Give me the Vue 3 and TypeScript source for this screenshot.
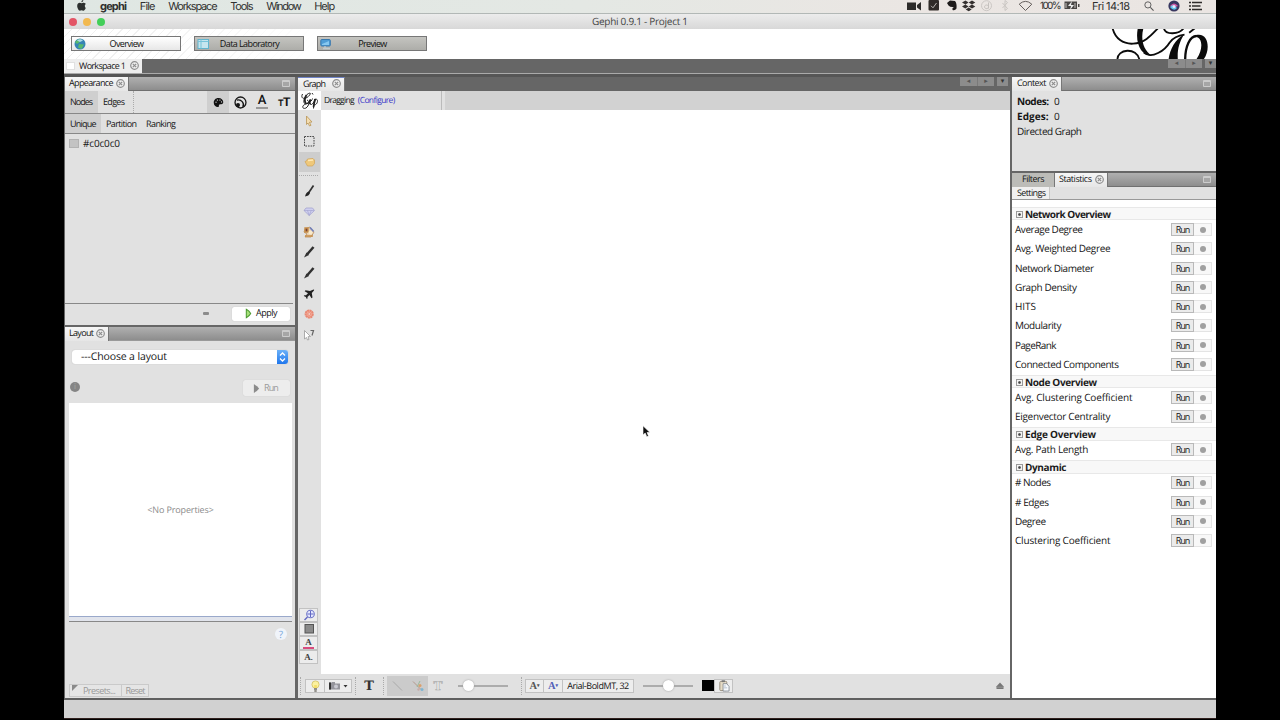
<script setup lang="ts">
import type { Directive } from 'vue'

interface Stat {
  name: string
  width: number
}

interface StatGroup {
  title: string
  width: number
  items: Stat[]
}

// Tracks a label out (or in) so that its glyphs span the given width in pixels.
const vFit: Directive<HTMLElement, number> = {
  mounted(el, { value }) {
    const range = document.createRange()
    range.selectNodeContents(el)
    const gaps = (el.textContent ?? '').length - 1
    const natural = range.getBoundingClientRect().width
    if (gaps > 0 && natural > 0) el.style.letterSpacing = `${((value - natural) / gaps).toFixed(3)}px`
  },
}

const menus: Stat[] = [
  { name: 'File', width: 15.5 },
  { name: 'Workspace', width: 49.5 },
  { name: 'Tools', width: 23.5 },
  { name: 'Window', width: 35.5 },
  { name: 'Help', width: 21 },
]

const groups: StatGroup[] = [
  {
    title: 'Network Overview',
    width: 86,
    items: [
      { name: 'Average Degree', width: 68 },
      { name: 'Avg. Weighted Degree', width: 95.5 },
      { name: 'Network Diameter', width: 79 },
      { name: 'Graph Density', width: 62 },
      { name: 'HITS', width: 21 },
      { name: 'Modularity', width: 46.5 },
      { name: 'PageRank', width: 41.5 },
      { name: 'Connected Components', width: 104 },
    ],
  },
  {
    title: 'Node Overview',
    width: 72,
    items: [
      { name: 'Avg. Clustering Coefficient', width: 117.5 },
      { name: 'Eigenvector Centrality', width: 95.5 },
    ],
  },
  { title: 'Edge Overview', width: 71, items: [{ name: 'Avg. Path Length', width: 73.5 }] },
  {
    title: 'Dynamic',
    width: 41.5,
    items: [
      { name: '# Nodes', width: 36 },
      { name: '# Edges', width: 34 },
      { name: 'Degree', width: 31 },
      { name: 'Clustering Coefficient', width: 95.5 },
    ],
  },
]
</script>

<template>
  <div class="screen">
    <div class="desktop">
      <header class="menubar">
        <svg class="apple" viewBox="0 0 10 12"><path d="M7 0C5.600.3 4.800 1.300 4.900 2.400 6.200 2.400 7.100 1.200 7 0ZM8.700 6.400C8.700 5 9.700 4.400 9.800 4.300 9 3.100 7.600 3 7 3 6.200 3 5.500 3.500 5 3.500S3.900 3 3.100 3C1.600 3 .2 4.300.2 6.600.2 8.900 1.800 11.700 3.100 11.700 3.800 11.700 4.200 11.200 5.100 11.200 5.900 11.200 6.200 11.700 7 11.700 8.200 11.700 9.300 9.900 9.700 8.700 9.500 8.600 8.700 8 8.700 6.400Z" /></svg>
        <span v-fit="27" class="menu app">gephi</span>
        <span v-for="m in menus" :key="m.name" v-fit="m.width" class="menu">{{ m.name }}</span>
        <svg class="tray" viewBox="0 0 120 12">
          <path d="M0 2.500h9v7.500H0zM10 5l4-3v8.500l-4-3z" fill="#2d2b2a" />
          <rect x="21.500" y="0" width="10.500" height="10.500" rx="1" fill="#302b28" />
          <path d="M24 5.800l2 2L29.500 3" fill="none" stroke="#b9b5b2" />
          <path d="M40 3l3-2.500 5 .5q2 2 1.500 7.500-1.500 2.500-4 1.500v-2q1.500-.5 1-1-3 .5-5-1.500z" fill="#1e1b1b" />
          <path d="M58.500 0.500l3 2-3 2-3.500-2zM65 .5l3.300 2-3.300 2-3.300-2zM58.300 4.500l3.300 2-3.300 2L55 6.500zM65 4.500l3.300 2-3.300 2-3.300-2zM61.700 7.500l3 2-3 1.800-3-1.800z" fill="#34302f" />
          <circle cx="79.500" cy="5.700" r="5" fill="none" stroke="#cbc7c4" />
          <path d="M81.500 2.500v6M81.500 6.500a2 1.800 0 1 0-.1 1" fill="none" stroke="#c5c1be" />
          <path d="M95.500 3l5 5.500-2.500 2V.5l2.500 2-5 5.500" fill="none" stroke="#c9c5c2" />
          <path d="M112.200 4.200Q118.500-1.500 124.800 4.200L118.500 10.500Z" fill="none" stroke="#655f5d" />
        </svg>
        <span v-fit="21.5" class="pct">100%</span>
        <svg class="batt" viewBox="0 0 16 9"><rect x=".5" y=".5" width="12.500" height="7.500" fill="#4a4745" /><rect x="14" y="3" width="1.500" height="3" fill="#4a4745" /><path d="M8 0L4 5h3l-1 4 4-5H7z" fill="#eee" /><path d="M2 2v5M11 2v5" stroke="#c8c4c1" /></svg>
        <span v-fit="38" class="clock">Fri 14:18</span>
        <svg class="find" viewBox="0 0 11 11"><circle cx="4.300" cy="4.300" r="3.400" fill="none" stroke="#555" /><path d="M7 7l3.500 3.500" stroke="#555" stroke-width="1.200" /></svg>
        <svg class="siri" viewBox="0 0 12 12"><circle cx="6" cy="6" r="5.600" fill="#383760" /><path d="M2 6Q6 1 10 6 6 8 2 6" fill="#d05ba8" /><path d="M2 7Q5 3 9 8 6 12 2 7" fill="#61c5ea" /><circle cx="6" cy="6.500" r="1.500" fill="#e7e6fb" /></svg>
        <svg class="list" viewBox="0 0 13 10"><path d="M0 1.500h2M3 1.500h10M0 5h2M3 5h8.500M0 8.500h2M3 8.500h10" stroke="#2f2c2b" stroke-width="1.400" /></svg>
      </header>

      <div class="titlebar">
        <i class="light red" /><i class="light amber" /><i class="light green" />
        <span v-fit="96" class="wintitle">Gephi 0.9.1 - Project 1</span>
      </div>

      <div class="perspectives">
        <button class="persp active">
          <svg viewBox="0 0 12 12"><circle cx="6" cy="6" r="5.500" fill="#3684b5" /><path d="M1 4Q3 1 7 1L6 4 3 6ZM5 6l5 .5L7.500 11 4 9.500Z" fill="#57b96c" /><path d="M3 2.500Q6 0 9 2.500L6 4Z" fill="#a9d9e8" /></svg>
          <span v-fit="34.5">Overview</span>
        </button>
        <button class="persp">
          <svg viewBox="0 0 12 12"><rect x="1" y="1.500" width="10.500" height="9" fill="#c7e6ef" stroke="#62b4cd" /><path d="M1 3.500h10.500M4 1.500v9" stroke="#79c4da" /></svg>
          <span v-fit="60">Data Laboratory</span>
        </button>
        <button class="persp">
          <svg viewBox="0 0 12 12"><rect x=".8" y="1.500" width="9.500" height="6.500" rx="1" fill="#4e9cd6" stroke="#3979ae" /><path d="M5 8v2.500M3 10.500h7" stroke="#bfc9cf" stroke-width="1.300" /><path d="M2 6l7-3v4H2z" fill="#86c7f0" /></svg>
          <span v-fit="29">Preview</span>
        </button>
        <svg class="logo" viewBox="690 87 290 90">
          <g fill="none" stroke="#0b0b0b" stroke-width="5.500">
            <path d="M694 84C702 116 726 133 756 131C792 128 810 106 830 85" />
            <path d="M709 180C706 146 768 140 775 180" />
            <path d="M848 84C852 106 894 104 908 84M942 84L924 98" />
            <path d="M788 158C812 179 852 150 865 128C878 110 892 106 910 104" />
            <path d="M912 180C912 140 926 108 946 108" stroke-width="7" />
          </g>
          <path d="M770 84h17C778 116 785 149 812 167 784 169 760 135 770 84ZM908 104C893 130 888 150 890 180H862C865 150 882 117 908 104ZM944 106C982 95 990 150 966 180H944C966 151 966 114 944 110Z" fill="#0b0b0b" />
        </svg>
      </div>

      <div class="workspaces">
        <div class="wtab">
          <i class="page" /><span v-fit="47">Workspace 1</span>
          <svg class="close" viewBox="0 0 9 9"><circle cx="4.500" cy="4.500" r="3.800" /><path d="M2.800 2.800l3.400 3.400M6.200 2.800L2.800 6.200" /></svg>
        </div>
        <div class="nav wnav"><i>◂</i><i>▸</i><b>▾</b></div>
      </div>

      <main class="main">
        <aside class="left">
          <section class="pane appearance">
            <div class="tabs">
              <div class="tab"><span v-fit="44.5">Appearance</span><svg class="close" viewBox="0 0 9 9"><circle cx="4.500" cy="4.500" r="3.800" /><path d="M2.800 2.800l3.400 3.400M6.200 2.800L2.800 6.200" /></svg></div>
              <i class="minim" />
            </div>
            <div class="row elements">
              <span v-fit="23" class="opt on">Nodes</span><span v-fit="22" class="opt edges">Edges</span>
              <div class="kinds">
                <span class="kind on"><svg viewBox="0 0 12 12"><path d="M6 1C2.500 1 .8 3.500.8 6c0 3 2 5 4.500 5 1.500 0 1-1.500 1.200-2.300C7 7.500 8 8 9 8c1.500 0 2.200-1.500 2.200-2.500C11 2.800 9 1 6 1Z" fill="#111" /><g fill="#ddd"><circle cx="3.300" cy="5.600" r=".7" /><circle cx="4.800" cy="3.300" r=".7" /><circle cx="7.600" cy="3.300" r=".7" /><circle cx="9.300" cy="5.400" r=".7" /></g></svg></span>
                <span class="kind"><svg viewBox="0 0 14 14"><g fill="none" stroke="#151515" stroke-width="1.400"><circle cx="7" cy="7" r="5.900" /><path d="M3 4.500A5.300 5.300 0 0 1 9.500 12" /></g><circle cx="4.300" cy="9.800" r="2.200" fill="#151515" /></svg></span>
                <span class="kind letter">A</span>
                <span class="kind size"><small>T</small>T</span>
              </div>
            </div>
            <div class="row modes"><span v-fit="26.5" class="opt on">Unique</span><span v-fit="31" class="opt part">Partition</span><span v-fit="30" class="opt">Ranking</span></div>
            <div class="colour"><i /><span v-fit="37">#c0c0c0</span></div>
            <div class="apply">
              <i class="grip" />
              <button><svg viewBox="0 0 8 12"><path d="M1.500 1.200Q5 3 6.500 6 5 9 1.500 10.800Z" fill="#a6e07a" stroke="#4d9b31" stroke-width="1.200" /></svg><span v-fit="21.5">Apply</span></button>
            </div>
          </section>

          <section class="pane layout">
            <div class="tabs">
              <div class="tab"><span v-fit="25">Layout</span><svg class="close" viewBox="0 0 9 9"><circle cx="4.500" cy="4.500" r="3.800" /><path d="M2.800 2.800l3.400 3.400M6.200 2.800L2.800 6.200" /></svg></div>
              <i class="minim" />
            </div>
            <div class="chooser"><span v-fit="86">---Choose a layout</span><svg viewBox="0 0 11 14"><path d="M3 5.500L5.500 3 8 5.500M3 8.500L5.500 11 8 8.500" fill="none" stroke="#fff" stroke-width="1.300" /></svg></div>
            <div class="runrow">
              <i class="info">i</i>
              <button><svg viewBox="0 0 8 12"><path d="M1 1Q5 3 7 6 5 9 1 11Z" fill="#8b8b8b" /></svg><span v-fit="15">Run</span></button>
            </div>
            <div class="props"><span v-fit="66.5">&lt;No Properties&gt;</span></div>
            <div class="desc"><i>?</i></div>
            <div class="presets"><button><svg viewBox="0 0 6 6"><path d="M0 0h6L0 6z" fill="#8a8a8a" /></svg><span v-fit="33">Presets...</span></button><button><span v-fit="20">Reset</span></button></div>
          </section>
        </aside>

        <section class="graph">
          <div class="gtabs">
            <div class="tab gtab"><span v-fit="23">Graph</span><svg class="close" viewBox="0 0 9 9"><circle cx="4.500" cy="4.500" r="3.800" /><path d="M2.800 2.800l3.400 3.400M6.200 2.800L2.800 6.200" /></svg></div>
            <div class="nav"><i>◂</i><i>▸</i><b>▾</b></div>
          </div>
          <div class="gbar">
            <svg class="glogo" viewBox="0 0 23 19"><rect width="23" height="19" fill="#fff" /><g fill="none" stroke="#222" stroke-width="1"><path d="M4.500 3C2.500 7 5.500 8.500 9 6.500c3-2 5-5.500 1.500-4C6 4.500 4 13 8 13c3 0 5-4 7-5.500M9 9c3 1 2 6-1 8-2 1-4 0-3-2 1-2 6-3 9-6M12.500 8.500c-2 3-1 5 1 5 2-1 3-4 4-5.500-1 3-2 6-2 9.500M16.500 8.500c4-2 4 4.500 0 5.500M14 2l1 1.500" /></g><path d="M8.500 4Q5.500 9 8 12.500M12.500 8.500q-2 3 0 4.500M17 8l-1.500 8" fill="none" stroke="#222" stroke-width="1.700" /></svg>
            <div class="gopts"><span v-fit="30.5">Dragging</span><em v-fit="37.5">(Configure)</em></div>
          </div>
          <div class="gbody">
            <div class="tools">
              <span><svg viewBox="0 0 16 16"><path d="M5.500 3l5.500 6-2.600.3 1.600 3-1.500.7-1.500-3-1.500 1.500z" fill="#f4ddb0" stroke="#b99455" stroke-width=".8" /></svg></span>
              <span><svg viewBox="0 0 16 16"><rect x="3.500" y="3.500" width="9.500" height="9.500" fill="none" stroke="#444" stroke-dasharray="1.600 1" /></svg></span>
              <span class="sel"><svg viewBox="0 0 16 16"><path d="M4.500 7L3 7.500 5.500 12h5l2-2.500V6l-1.500-1.500-5.500 .5z" fill="#efc87a" stroke="#d0a456" stroke-width=".7" /><path d="M6 6.500l5-.5" stroke="#ffe9b5" stroke-width="1.500" /></svg></span>
              <hr />
              <span><svg viewBox="0 0 16 16"><path d="M12.500 2.500L7.500 10" stroke="#333" stroke-width="1.700" /><path d="M8 8.500Q5 9 4 13.500 8 13 9 10Z" fill="#252525" /></svg></span>
              <span><svg viewBox="0 0 16 16"><path d="M5 5h6.500L13.500 7.500 8.200 12.500 3 7.500Z" fill="#cfcfef" stroke="#a5a5cf" stroke-width=".8" /><path d="M3 7.500h10M6.500 7.500l1.700 5 2-5" stroke="#9d9dcb" stroke-width=".6" fill="none" /></svg></span>
              <span><svg viewBox="0 0 16 16"><path d="M4 5l5-2 4 5-3 5H4l2-3-3-2z" fill="#ebd3b4" stroke="#b98c5a" stroke-width=".8" /><path d="M4 4h3v4H4zM4 12h8" fill="#773e35" stroke="#c68f4a" stroke-width="1.400" /><path d="M9 3.500l3.500 4" stroke="#7281bd" stroke-width="1.800" /><circle cx="9.500" cy="8.500" r="2" fill="#f9eacb" /></svg></span>
              <span v-for="n in 2" :key="n"><svg viewBox="0 0 16 16"><path d="M12.500 3L6 10.500" stroke="#303030" stroke-width="2.500" /><path d="M5.500 8.500L3 13.500 8 11z" fill="#333" /></svg></span>
              <span><svg viewBox="0 0 16 16"><path d="M12.500 3.500q1 0 .5 1L10.800 7l.7 4.500-1 .8L8.500 9 6.500 11v1.500l-.7.5-1-2-2-1 .5-.8H5l2-2-3.300-2 .8-1 4.500.7z" fill="#222" /></svg></span>
              <span><svg viewBox="0 0 16 16"><circle cx="8.200" cy="8" r="3.600" fill="#f5aa98" stroke="#e88873" stroke-width="2" stroke-dasharray="2 .4" /><circle cx="8.200" cy="8" r="1.300" fill="#fae4db" stroke="#e47d67" stroke-width=".7" /></svg></span>
              <span><svg viewBox="0 0 16 16"><path d="M3.500 3.500l6 6-2.500.2 1 2.800-1.500.5-1-2.500-2 1.500z" fill="#fff" stroke="#999" stroke-width=".8" /><path d="M9.500 3.500h3L11 8.500" fill="none" stroke="#666" stroke-width="1.200" /></svg></span>
              <div class="views">
                <span><svg viewBox="0 0 16 12"><circle cx="9.500" cy="5" r="3.800" fill="#e4e8ff" stroke="#7076c7" stroke-width="1.100" /><path d="M9.500 2v6M6.500 5h6" stroke="#6369c3" stroke-width="1" /><path d="M6.500 8l-3 3" stroke="#6369c3" stroke-width="1.400" /></svg></span>
                <span><svg viewBox="0 0 16 12"><rect x="4" y="1.500" width="8.500" height="8.500" fill="#8a8a8a" stroke="#545454" /></svg></span>
                <span class="ltr"><u>A</u></span>
                <span class="ltr">A<sub>.</sub></span>
              </div>
            </div>
            <div class="canvas">
              <svg class="cursor" viewBox="0 0 9 13"><path d="M1 .8V10L3.200 8 4.800 11.800 6.500 11 5 7.500H8Z" fill="#111" stroke="#fff" stroke-width=".6" /></svg>
            </div>
          </div>
          <div class="gfoot">
            <i class="dots" />
            <span class="fb bulb"><svg viewBox="0 0 16 12"><circle cx="8.500" cy="4.500" r="3.600" fill="#fbf1a0" stroke="#cdb957" stroke-width=".7" /><path d="M7.200 5v3h2.600V5" fill="#f5df65" /><path d="M7 9h3M7.300 11h2.400" stroke="#77746c" stroke-width="1.400" /></svg></span>
            <span class="fb cam"><svg viewBox="0 0 24 12"><path d="M3 2.500h3V2h3v1.500h5v6H3z" fill="#94949b" /><path d="M3 2.500h2v7H3z" fill="#333" /><circle cx="10" cy="6.500" r="2" fill="#c9c9d1" /><path d="M17.500 5h4l-2 2.500z" fill="#333" /></svg></span>
            <i class="dots d2" />
            <b class="bigt">T</b>
            <i class="dots d3" />
            <span class="edgesel">
              <svg viewBox="0 0 16 16"><path d="M4 3.500l9 9" stroke="#aaa" /></svg>
              <svg viewBox="0 0 16 16"><path d="M3 3.500l8 8" stroke="#b4998d" /><path d="M10 3L7 9" stroke="#98b99c" /><circle cx="10" cy="7.500" r="1.500" fill="#dba06b" /><circle cx="12" cy="11.500" r="1.500" fill="#7eb5d2" /><circle cx="8.500" cy="11.500" r="1.200" fill="#c6abaa" /></svg>
            </span>
            <b class="bigt hollow">T</b>
            <span class="slider s1"><i /></span>
            <i class="dots d4" />
            <span class="fb fnt">A<small>▾</small></span>
            <span class="fb fnt blue">A<small>▾</small></span>
            <span class="fb face"><span v-fit="62">Arial-BoldMT, 32</span></span>
            <span class="slider s2"><i /></span>
            <i class="black" />
            <span class="fb clip"><svg viewBox="0 0 16 13"><rect x="3.500" y="1.500" width="7.500" height="10" rx="1" fill="#e6dcc6" stroke="#93897a" /><rect x="5.500" y=".3" width="3.500" height="2" fill="#777" /><path d="M7 4h4l2.500 3v5H7z" fill="#f7fafd" stroke="#737b85" stroke-width=".8" /><path d="M8 6.500h2M8 8.500h3.500" stroke="#94a5ba" stroke-width=".7" /></svg></span>
            <svg class="eject" viewBox="0 0 8 8"><path d="M4 .5L7.500 4.300V7H.5V4.300z" fill="#777" /><path d="M1 5.200h6" stroke="#aaa" stroke-width=".6" /></svg>
          </div>
        </section>

        <aside class="right">
          <section class="pane context">
            <div class="tabs">
              <div class="tab"><span v-fit="29.5">Context</span><svg class="close" viewBox="0 0 9 9"><circle cx="4.500" cy="4.500" r="3.800" /><path d="M2.800 2.800l3.400 3.400M6.200 2.800L2.800 6.200" /></svg></div>
              <i class="minim" />
            </div>
            <dl>
              <div><dt><span v-fit="32">Nodes:</span></dt><dd>0</dd></div>
              <div><dt><span v-fit="31.5">Edges:</span></dt><dd>0</dd></div>
              <div><span v-fit="65">Directed Graph</span></div>
            </dl>
          </section>
          <section class="pane stats">
            <div class="tabs">
              <div class="tab off"><span v-fit="22.5">Filters</span></div>
              <div class="tab"><span v-fit="33">Statistics</span><svg class="close" viewBox="0 0 9 9"><circle cx="4.500" cy="4.500" r="3.800" /><path d="M2.800 2.800l3.400 3.400M6.200 2.800L2.800 6.200" /></svg></div>
              <i class="minim" />
            </div>
            <div class="settings"><span v-fit="29">Settings</span></div>
            <div class="statlist">
              <template v-for="g in groups" :key="g.title">
                <h3><i /><span v-fit="g.width">{{ g.title }}</span></h3>
                <div v-for="s in g.items" :key="s.name" class="stat">
                  <span v-fit="s.width" class="name">{{ s.name }}</span>
                  <button><span v-fit="14.5">Run</span></button><b><i /></b>
                </div>
              </template>
            </div>
          </section>
        </aside>
      </main>
      <footer class="status" />
    </div>
  </div>
</template>

<style>
body { background: #000; }
</style>

<style scoped>
* { box-sizing: border-box; }
.screen { width: 1280px; height: 720px; background: #000; display: flex; justify-content: center; overflow: hidden; font: 9px/14px "Open Sans", "Noto Sans", sans-serif; text-rendering: geometricPrecision; color: #151515; white-space: nowrap; }
.desktop { width: 1152px; height: 719px; display: flex; flex-direction: column; background: #666; }
svg { display: block; flex: none; }
button { font: inherit; color: inherit; padding: 0; margin: 0; border: 0; display: flex; align-items: center; justify-content: center; }
i { font-style: normal; display: block; flex: none; }

.menubar { height: 14px; flex: none; display: flex; align-items: flex-start; background: linear-gradient(90deg, #dfe7e3, #e4e8e4 45%, #ebe6e3 75%, #eae5e2); border-bottom: 1px solid #b2b8b6; font: 11px/12px Inter, sans-serif; color: #30302f; padding-left: 13px; overflow: hidden; }
.apple { width: 9px; height: 11px; margin-right: 14px; fill: #2c302f; }
.menu { flex: none; margin-right: 13.700px; }
.app { font-weight: 700; }
.tray { width: 120px; height: 12px; margin-left: auto; overflow: visible; }
.pct { width: 24px; margin-left: 13px; font-size: 10px; }
.batt { width: 16px; height: 9px; margin: 1px 0 0 0; }
.clock { margin-left: 12px; width: 38px; }
.find { width: 10px; height: 10px; margin: 1px 0 0 14px; }
.siri { width: 12px; height: 12px; margin-left: 14px; }
.list { width: 13px; height: 10px; margin: 1px 14px 0 9px; }

.titlebar { height: 15px; flex: none; display: flex; align-items: center; background: linear-gradient(#ececec, #d8d8d8); padding-left: 5px; gap: 6px; }
.light { width: 8px; height: 8px; border-radius: 50%; }
.red { background: #e35566; }
.amber { background: #f2b950; }
.green { background: #43cf59; }
.wintitle { margin-left: 481px; line-height: 15px; font-size: 10px; color: #444; }

.perspectives { height: 30px; flex: none; display: flex; align-items: flex-start; padding: 7px 10px 0 7px; gap: 13px; background: linear-gradient(90deg, transparent 60px, #fff 260px), repeating-linear-gradient(135deg, #fff 0 5px, #f0f0f0 5px 6px); overflow: hidden; }
.persp { width: 110px; height: 15px; border: 1px solid #777; background: linear-gradient(#c4c4c0, #adada9); padding-left: 2px; justify-content: flex-start; color: #111; line-height: 12px; }
.persp svg { width: 12px; height: 12px; }
.persp span { flex: 1; text-align: center; padding: 0 13px 0 0; }
.persp.active { background: linear-gradient(#fff, #e7e7e7); }
.logo { width: 97px; height: 30px; margin: -7px -2px 0 auto; }

.workspaces { height: 18px; flex: none; display: flex; background: linear-gradient(#666 14px, #aaa 14px 15px, #565656 15px); }
.wtab { height: 14px; width: 78px; background: #eee; display: flex; align-items: center; padding: 0 0 1px 2px; }
.page { width: 9px; height: 8px; background: #fff; border: 1px solid #e0e0e0; margin-right: 4px; }
.wtab span { width: 51px; }
.close { width: 9px; height: 9px; fill: #f0f0f0; stroke: #8e8e8e; stroke-width: 1.200; }
.nav { display: flex; margin-left: auto; }
.nav i, .nav b { width: 17px; height: 9px; background: #8c8c8c; font: 7px/9px "DejaVu Sans", sans-serif; text-align: center; color: #555; }
.nav i + i { border-left: 1px solid #7a7a7a; }
.nav b { width: 11px; margin-left: 3px; color: #333; }

.main { flex: 1; display: flex; min-height: 0; padding-left: 1px; }
.left { width: 230px; display: flex; flex-direction: column; gap: 2px; }
.pane { display: flex; flex-direction: column; background: #e1e1e1; }
.tabs { height: 14px; flex: none; display: flex; background: linear-gradient(#b0b0b0, #8d8d8d); border-bottom: 1px solid #707070; }
.tab { height: 14px; background: linear-gradient(#f6f6f6, #e6e6e6); display: flex; align-items: center; padding: 0 3px 2px 4px; gap: 3px; border-right: 1px solid #777; color: #151515; }
.tab.off { background: #bcbcb8; padding: 0 10px 2px 10px; }
.minim { width: 8px; height: 7px; border: 1px solid #ccc; border-top-width: 2px; margin: 3px 5px 0 auto; border-radius: 1px; background: #a6a6a6; }
.appearance { height: 248px; flex: none; }
.row { display: flex; border-bottom: 1px solid #888; }
.opt { padding: 0 5px; display: flex; align-items: center; }
.opt.on { background: #cfcfcf; }
.elements { height: 23px; flex: none; }
.elements .opt { padding-bottom: 1px; }
.elements .opt.on { width: 33px; }
.elements .edges { width: 36px; border-right: 1px dotted #aaa; }
.kinds { display: flex; margin-left: auto; }
.kind { width: 22px; display: flex; align-items: center; justify-content: center; font: 500 13px/14px Roboto, sans-serif; color: #151515; }
.kind.on { background: #cfcfcf; }
.kind svg { width: 13px; height: 13px; }
.kind.on svg { width: 11px; height: 11px; }
.letter { border-bottom: 2px solid #999; width: 12px; height: 15px; margin: 3px 5px; }
.size { align-items: baseline; padding-top: 4px; letter-spacing: -.5px; font-weight: 700; font-size: 12px; }
.size small { font-size: 9px; }
.modes { height: 20px; flex: none; }
.modes .opt.on { width: 36px; }
.modes .part { width: 40px; }
.colour { flex: 1; display: flex; gap: 4px; padding: 2px 4px; }
.colour span { font-size: 10px; }
.colour i { width: 10px; height: 9px; margin-top: 3px; background: #c3c3c3; border: 1px solid #b2b2b2; }
.apply { height: 22px; flex: none; border-top: 1px solid #888; margin-right: 2px; padding-bottom: 1.500px; display: flex; align-items: center; justify-content: flex-end; }
.grip { width: 6px; height: 3px; background: #8b8b8b; margin-right: 23px; border-radius: 1px; }
.apply button { width: 58px; height: 14px; margin-right: 3px; background: #fff; border-radius: 2px; box-shadow: 0 0 1px #aaa; gap: 4px; line-height: 12px; }
.apply button span { padding-bottom: 1px; }
.apply button svg { width: 7px; height: 11px; }

.layout { flex: 1; }
.layout .tabs { border-bottom-color: #999; }
.chooser { flex: none; margin: 9px 7px 0; height: 14px; background: #fff; display: flex; align-items: center; justify-content: space-between; padding-left: 9px; border-radius: 3px; box-shadow: 0 0 1px #aaa; font-size: 10.500px; }
.chooser svg { width: 11px; height: 14px; background: linear-gradient(#6bb1f8, #1f76ec); border-radius: 0 3px 3px 0; }
.chooser span { padding-bottom: 1px; }
.runrow { height: 39px; display: flex; justify-content: space-between; padding: 16px 5px 0 5px; flex: none; }
.info { width: 10px; height: 10px; border-radius: 50%; background: #858585; color: #999; font: 700 8px/10px "Open Sans", sans-serif; text-align: center; margin-top: 2px; }
.runrow button { width: 47px; height: 16px; background: #ededed; color: #999; border-radius: 2px; gap: 4px; box-shadow: 0 0 1px #bbb; padding-right: 2px; }
.runrow button svg { width: 7px; height: 11px; }
.props { height: 213px; margin: 0 3px 0 4px; background: #fff; display: flex; align-items: center; justify-content: center; color: #8b8b8b; flex: none; }
.desc { flex: 1; margin: 0 3px 0 4px; border-top: 1px solid #9aa9cb; background: linear-gradient(#e1e4ec 4px, #888 4px 5px, #e1e1e1 5px); display: flex; justify-content: flex-end; padding: 11px 5px 0; }
.desc i { width: 12px; height: 12px; border-radius: 50%; background: #f0f4fa; color: #79a8dd; font: 10px/12px "Open Sans", sans-serif; text-align: center; }
.presets { display: flex; margin: 0 4px 1px; height: 13px; color: #999; flex: none; line-height: 11px; }
.presets button { background: #e5e5e5; border: 1px solid #cacaca; height: 13px; width: 28px; }
.presets button:first-child { width: 52px; justify-content: flex-start; padding-left: 2px; gap: 5px; border-right: 0; }
.presets svg { width: 6px; height: 6px; margin-bottom: 5px; }

.graph { width: 712px; margin-left: 3px; display: flex; flex-direction: column; background: #e1e1e1; }
.gtabs { height: 14px; background: #666; display: flex; flex: none; }
.gtab { border-top: 1px solid #7084c8; padding: 0 3px 2px 5px; gap: 7px; width: 47px; }
.gtabs .nav { margin-right: 2px; }
.gbar { height: 19px; display: flex; background: #d2d2d2; flex: none; }
.glogo { width: 23px; height: 19px; }
.gopts { width: 121px; background: #e1e1e1; display: flex; align-items: center; gap: 4px; padding: 0 0 0 3px; font-size: 8.500px; border-right: 1px solid #bbb; box-shadow: 3px 0 #e1e1e1; }
.gopts em { font-style: normal; color: #3a3ac9; }
.gbody { flex: 1; display: flex; min-height: 0; }
.tools { width: 23px; display: flex; flex-direction: column; padding: .500px 1px 0 0; }
.tools > span { height: 20.600px; flex: none; display: flex; align-items: center; justify-content: center; }
.tools svg { width: 16px; height: 16px; }
.tools .sel { background: #cdcdcd; margin-left: 1px; }
.tools hr { width: 19px; height: 1px; border: 0; border-top: 1px dotted #aaa; margin: 3px 1px 4px; flex: none; }
.views { margin-top: auto; margin-bottom: 10px; padding: 0 2px 0 1px; }
.views span { height: 14px; border: 1px solid #c2c2c2; background: #ececec; display: flex; align-items: center; justify-content: center; }
.views svg { height: 12px; }
.ltr { font: 700 9px/9px "Liberation Serif", serif; color: #444; }
.ltr u { text-decoration: none; border-bottom: 2px solid #d94c7e; padding: 0 2px; }
.canvas { flex: 1; background: #fff; position: relative; }
.cursor { position: absolute; left: 321px; top: 315px; width: 9px; height: 13px; }
.gfoot { height: 24px; flex: none; display: flex; align-items: center; padding-bottom: 1px; }
.dots { width: 1px; height: 18px; border-left: 1px dotted #aaa; margin: 0 4px 0 2px; }
.fb { height: 14px; border: 1px solid #c2c2c2; background: #ededed; display: flex; align-items: center; justify-content: center; flex: none; }
.bulb { width: 20px; }
.bulb svg, .clip svg { width: 16px; height: 12px; }
.cam { width: 27px; border-left: 0; }
.cam svg { width: 24px; height: 12px; }
.d2 { margin: 0 7px 0 3px; }
.bigt { font: 700 13px/14px "DejaVu Serif", serif; color: #333; width: 12px; text-align: center; padding-top: 2px; }
.d3 { margin: 0 3px 0 8px; }
.edgesel { width: 41px; height: 20px; background: #cbcbcb; display: flex; align-items: center; justify-content: space-around; margin-right: 4px; }
.edgesel svg { width: 16px; height: 16px; }
.hollow { color: #ededed; font-size: 12px; -webkit-text-stroke: .6px #aaa; padding-top: 0; }
.slider { width: 50px; height: 2px; background: #acacac; }
.slider i { width: 11px; height: 11px; background: #fff; border-radius: 50%; box-shadow: 0 0 2px #999; margin-top: -4.500px; }
.s1 { margin-left: 14px; }
.s1 i { margin-left: 5px; }
.d4 { margin: 0 3px 0 13px; }
.fnt { width: 19px; font: 700 10.500px/13px "Liberation Serif", serif; color: #555; padding-top: 1px; }
.fnt small { font-size: 5px; }
.fnt.blue { color: #5260b8; border-left: 0; }
.face { width: 71px; border-left: 0; }
.s2 { margin-left: 9px; }
.s2 i { margin-left: 20px; }
.black { width: 12px; height: 11px; background: #000; margin-left: 9px; }
.clip { width: 19px; }
.eject { width: 8px; height: 8px; margin: 0 6px 0 auto; }

.right { width: 204px; margin-left: 2px; display: flex; flex-direction: column; gap: 2px; }
.context { height: 94px; flex: none; }
.context .tab { padding-left: 5px; }
.context dl { margin: 0; padding: 3px 5px; font-size: 10px; line-height: 15.200px; }
.context dl div { display: flex; height: 15.200px; }
.context dt { font-weight: 700; width: 37px; }
.context dd { margin: 0; }
.stats { flex: 1; background: #fff; }
.settings { height: 13px; background: #e1e1e1; border-bottom: 1px solid #999; display: flex; flex: none; }
.settings span { background: #f0f0f0; border-right: 1px solid #c8c8c8; padding: 0 4px 0 5px; line-height: 12px; }
.statlist { padding-top: 6.700px; }
h3 { margin: 0; height: 13.800px; background: #f8f8f8; border-top: 1px solid #e8e8e8; border-bottom: 1px solid #e8e8e8; display: flex; align-items: center; font-size: 10px; font-weight: 700; padding: 1px 0 0 4px; color: #1c1c1c; }
h3 i { width: 7px; height: 7px; border: 1px solid #999; margin-right: 2px; background: radial-gradient(#444 .800px, #f4f4f4 1.800px); }
.stat { height: 19.270px; display: flex; align-items: center; padding: 0 4px 1px 3px; }
.name { font-size: 10px; padding-bottom: 1px; }
.stat button { width: 23px; height: 13px; background: #ebebeb; border: 1px solid #b9b9b9; margin-left: auto; line-height: 11px; }
.stat b { width: 18px; height: 13px; border: 1px solid #e4e4e4; border-left: 0; background: #f8f8f8; display: flex; align-items: center; justify-content: center; }
.stat b i { width: 6px; height: 6px; border-radius: 50%; background: #a0a0a0; }

.status { height: 21px; flex: none; background: #d1d1d1; border-top: 2px solid #606060; border-bottom: 1px solid #30201e; }
</style>
